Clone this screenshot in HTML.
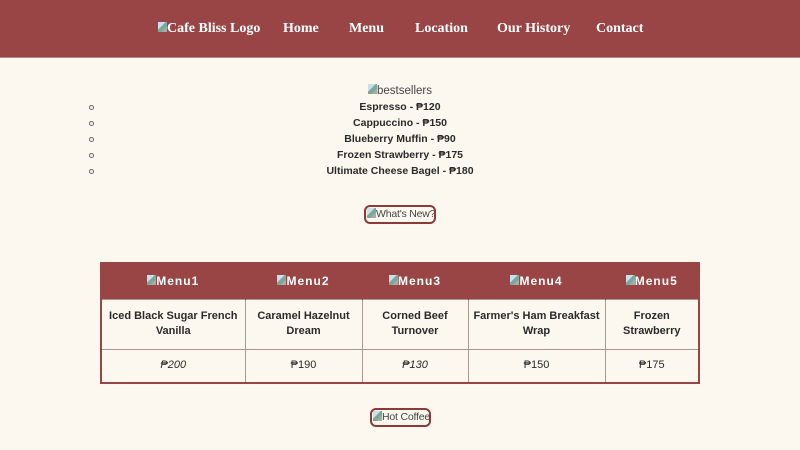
<!DOCTYPE html>
<html><head><meta charset="utf-8"><style>
*{margin:0;padding:0;box-sizing:border-box}
body{width:800px;height:450px;overflow:hidden;background:#fcf8ef;font-family:"Liberation Sans",sans-serif;color:#2a2a2a;position:relative}
.hdr{position:absolute;left:0;top:0;width:800px;height:58px;background:#9a4545;border-bottom:1px solid #b88}
.nav{position:absolute;top:21px;font-family:"Liberation Serif",serif;font-weight:bold;font-size:14px;color:#fff;white-space:nowrap}
.ico{display:inline-block;width:9px;height:10px;background:linear-gradient(135deg,#cde 0 40%,#7a9 40% 70%,#aaa 70%);vertical-align:top;margin-top:1px}
.li{position:absolute;left:0;width:800px;text-align:center;font-weight:bold;font-size:10.5px;line-height:16px}
.bul{position:absolute;left:89px;width:5px;height:5px;border:1px solid #666;border-radius:50%}
.btn{position:absolute;border:2px solid #8b3a3a;border-radius:6px;font-size:10.5px;color:#444;line-height:14px;padding-left:1px;white-space:nowrap;overflow:hidden;letter-spacing:-0.2px}
table{position:absolute;left:100px;top:262px;width:600px;border-collapse:collapse;border:2px solid #9a4545}
th{background:#9a4545;color:#fff;height:36px;font-size:12px;letter-spacing:1px;font-weight:bold;border-right:1px solid #9a4545}
td{border:1px solid #a89890;text-align:center;font-size:11px;line-height:15px}
.n td{height:50px;font-weight:bold;padding:0 2px}
.p td{height:34px}
</style></head><body>
<div class="hdr"></div>
<div class="nav" style="left:158px"><span class="ico"></span>Cafe Bliss Logo</div>
<div class="nav" style="left:283px">Home</div>
<div class="nav" style="left:349px">Menu</div>
<div class="nav" style="left:415px">Location</div>
<div class="nav" style="left:497px">Our History</div>
<div class="nav" style="left:596px">Contact</div>

<div class="li" style="top:83px;font-weight:normal;color:#444;font-size:11.5px"><span class="ico"></span>bestsellers</div>
<div class="li" style="top:99px">Espresso - ₱120</div>
<div class="li" style="top:115px">Cappuccino - ₱150</div>
<div class="li" style="top:131px">Blueberry Muffin - ₱90</div>
<div class="li" style="top:147px">Frozen Strawberry - ₱175</div>
<div class="li" style="top:163px">Ultimate Cheese Bagel - ₱180</div>
<div class="bul" style="top:105px"></div><div class="bul" style="top:121px"></div><div class="bul" style="top:137px"></div><div class="bul" style="top:153px"></div><div class="bul" style="top:169px"></div>

<div class="btn" style="left:364px;top:205px;width:72px;height:19px"><span class="ico"></span>What's New?</div>

<table>
<tr><th style="width:144px"><span class="ico"></span>Menu1</th><th style="width:117px"><span class="ico"></span>Menu2</th><th style="width:106px"><span class="ico"></span>Menu3</th><th style="width:137px"><span class="ico"></span>Menu4</th><th><span class="ico"></span>Menu5</th></tr>
<tr class="n"><td>Iced Black Sugar French Vanilla</td><td>Caramel Hazelnut Dream</td><td>Corned Beef Turnover</td><td>Farmer's Ham Breakfast Wrap</td><td>Frozen Strawberry</td></tr>
<tr class="p"><td><i>₱200</i></td><td>₱190</td><td><i>₱130</i></td><td>₱150</td><td>₱175</td></tr>
</table>

<div class="btn" style="left:370px;top:408px;width:61px;height:19px"><span class="ico"></span>Hot Coffee</div>
</body></html>
